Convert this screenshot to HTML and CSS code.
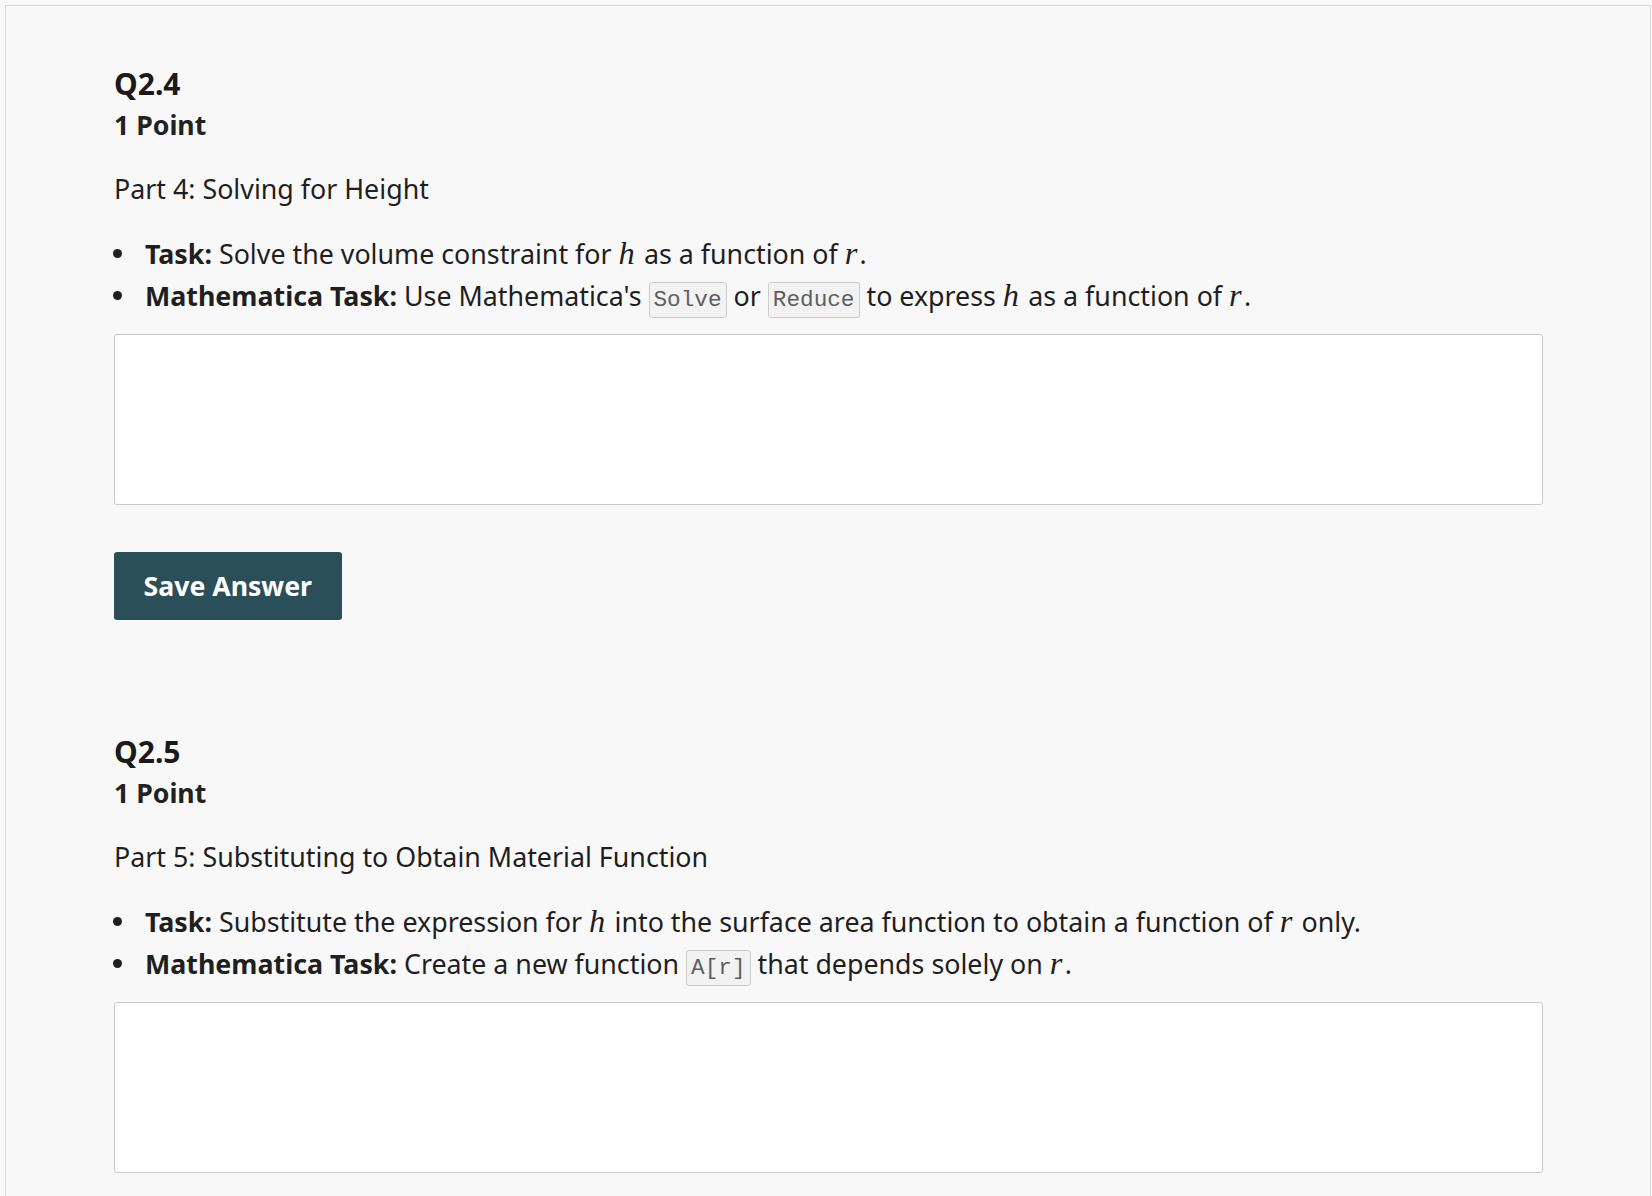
FILE: index.html
```html
<!DOCTYPE html>
<html lang="en">
<head>
<meta charset="utf-8">
<title>Q2.4 – Q2.5</title>
<link rel="stylesheet" href="styles.css">
</head>
<body>
<div class="frame">
  <section class="question">
    <h2 class="q-title">Q2.4</h2>
    <div class="q-points">1 Point</div>
    <p class="q-text">Part 4: Solving for Height</p>
    <ul class="q-list">
      <li><strong>Task:</strong> Solve the volume constraint for <span class="math">h</span> as a function of <span class="math">r</span>.</li>
      <li><strong>Mathematica Task:</strong> Use Mathematica's <code>Solve</code> or <code>Reduce</code> to express <span class="math">h</span> as a function of <span class="math">r</span>.</li>
    </ul>
    <textarea class="answer" aria-label="Answer for Q2.4"></textarea>
    <button class="save-btn" type="button">Save Answer</button>
  </section>
  <section class="question">
    <h2 class="q-title">Q2.5</h2>
    <div class="q-points">1 Point</div>
    <p class="q-text">Part 5: Substituting to Obtain Material Function</p>
    <ul class="q-list">
      <li><strong>Task:</strong> Substitute the expression for <span class="math">h</span> into the surface area function to obtain a function of <span class="math">r</span> only.</li>
      <li><strong>Mathematica Task:</strong> Create a new function <code>A[r]</code> that depends solely on <span class="math">r</span>.</li>
    </ul>
    <textarea class="answer" aria-label="Answer for Q2.5"></textarea>
  </section>
</div>
</body>
</html>
```

FILE: styles.css
```css
html, body {
  margin: 0;
  padding: 0;
  background: #f8f8f8;
}

body {
  font-family: "Noto Sans", "Open Sans", sans-serif;
  font-size: 26.8px;
  color: #1f1f1f;
  overflow: hidden;
}

.frame {
  margin: 5px 1px 0 5px;
  border-top: 1px solid #d8d8d8;
  border-left: 1px solid #d8d8d8;
  border-right: 1px solid #d8d8d8;
  padding: 57px 107px 0 108px;
  min-height: 1300px;
  box-sizing: border-box;
}

.question + .question {
  margin-top: 111px;
}

.q-title {
  margin: 0;
  font-size: 30px;
  font-weight: 700;
  line-height: 42px;
  color: #1a1a1a;
}

.q-points {
  font-size: 26.67px;
  font-weight: 700;
  line-height: 40px;
  color: #222;
}

.q-text {
  margin: 24px 0 0;
  line-height: 40px;
}

.q-list {
  margin: 24px 0 0;
  padding-left: 31px;
  list-style: none;
}

.q-list li {
  line-height: 42px;
}

.q-list li::before {
  content: "";
  display: inline-block;
  width: 9px;
  height: 9px;
  border-radius: 50%;
  background: #1f1f1f;
  margin-left: -32px;
  margin-right: 23px;
  vertical-align: 0.22em;
}

.q-list strong {
  font-weight: 700;
}

.math {
  font-family: "Liberation Serif", "Times New Roman", serif;
  font-style: italic;
  font-size: 1.21em;
  line-height: 1;
  margin-right: 0.07em;
}

code {
  font-family: "Liberation Mono", "Courier New", monospace;
  font-size: 22.7px;
  color: #5e5e5e;
  background: #f2f2f2;
  border: 1px solid #cccccc;
  border-radius: 3px;
  padding: 4px 4px;
  line-height: 1;
}

.answer {
  display: block;
  width: 100%;
  height: 171px;
  margin: 17px 0 0;
  box-sizing: border-box;
  border: 1px solid #c9c9c9;
  border-radius: 3px;
  background: #ffffff;
  resize: none;
  padding: 10px;
  font: inherit;
}

.save-btn {
  display: block;
  margin-top: 47px;
  padding: 14px 29.5px;
  border: none;
  border-radius: 3px;
  background: #2b4f59;
  color: #ffffff;
  font-family: "Noto Sans", "Open Sans", sans-serif;
  font-size: 26.67px;
  font-weight: 700;
  line-height: 40px;
  cursor: pointer;
}
```
